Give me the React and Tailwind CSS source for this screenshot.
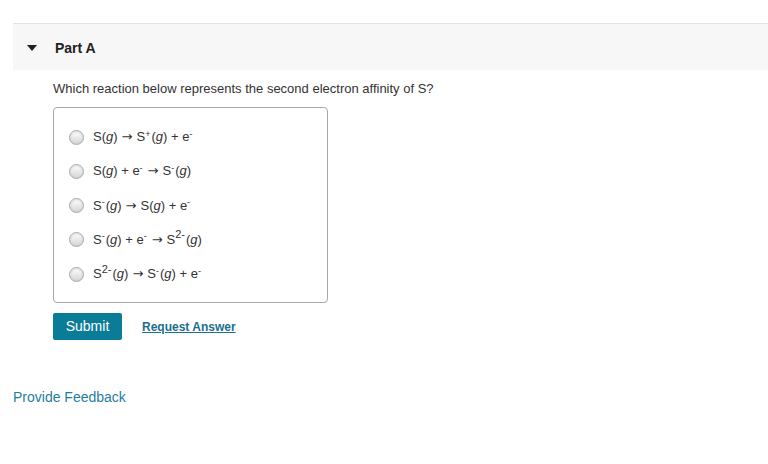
const OPTIONS = [
  ['S(', 'g', ')', '→', 'S', '+', '(', 'g', ') + e', '-'],
  ['S(', 'g', ') + e', '-', '→', 'S', '-', '(', 'g', ')'],
  ['S', '-', '(', 'g', ')', '→', 'S(', 'g', ') + e', '-'],
  ['S', '-', '(', 'g', ') + e', '-', '→', 'S', '2-', '(', 'g', ')'],
  ['S', '2-', '(', 'g', ')', '→', 'S', '-', '(', 'g', ') + e', '-'],
]

function Formula({ parts }) {
  return (
    <span className="whitespace-pre">
      {parts.map((p, i) => {
        if (p === 'g') return <i key={i}>g</i>
        if (p === '→') return <span key={i} className="font-['DejaVu_Sans',sans-serif] text-[13px] mx-[4px]">→</span>
        if (p === '+' || p === '-') return <sup key={i} className="text-[9px] mr-[1px]">{p}</sup>
        if (p === '2-') return <sup key={i} className="text-[11px] mr-[1px]">{p}</sup>
        return <span key={i}>{p}</span>
      })}
    </span>
  )
}

function Radio() {
  return (
    <span className="w-[15px] h-[15px] rounded-full border border-[#a9a9a9] bg-gradient-to-b from-[#ffffff] to-[#d4d4d4] shadow-[inset_0_1px_2px_rgba(0,0,0,0.15)] shrink-0" />
  )
}

export default function App() {
  return (
    <div className="w-[768px] h-[464px] bg-white text-[#333] font-['Liberation_Sans',Arial,sans-serif] pt-[23px]">
      <div className="ml-[13px] border-t border-[#e3e3e3] bg-[#f7f7f7] h-[47px] flex items-center pt-[2px]">
        <svg width="10" height="6" viewBox="0 0 10 6" className="ml-[14px]">
          <path d="M0 0 L10 0 L5 6 Z" fill="#222" />
        </svg>
        <span className="ml-[18px] text-[14px] font-bold text-[#222]">Part A</span>
      </div>

      <div className="pl-[53px]">
        <p className="text-[13px] mt-[11px] leading-[15px]">Which reaction below represents the second electron affinity of S?</p>

        <div className="mt-[11px] w-[275px] h-[196px] border border-[#a8a8a8] rounded-[4px] pt-[22px] pl-[15px] flex flex-col gap-[20.3px]">
          {OPTIONS.map((o, i) => (
            <label key={i} className="flex items-center gap-[9px] text-[13px] h-[14px] leading-[14px]">
              <Radio />
              <Formula parts={o} />
            </label>
          ))}
        </div>

        <div className="mt-[10px] flex items-center">
          <button className="w-[69px] h-[27px] bg-[#0b7c98] text-white text-[14px] rounded-[2px]">Submit</button>
          <a className="ml-[20px] text-[12px] font-bold text-[#1c6f8c] underline">Request Answer</a>
        </div>
      </div>

      <p className="ml-[13px] mt-[47px] text-[14px] text-[#1f7ea0]">Provide Feedback</p>
    </div>
  )
}
